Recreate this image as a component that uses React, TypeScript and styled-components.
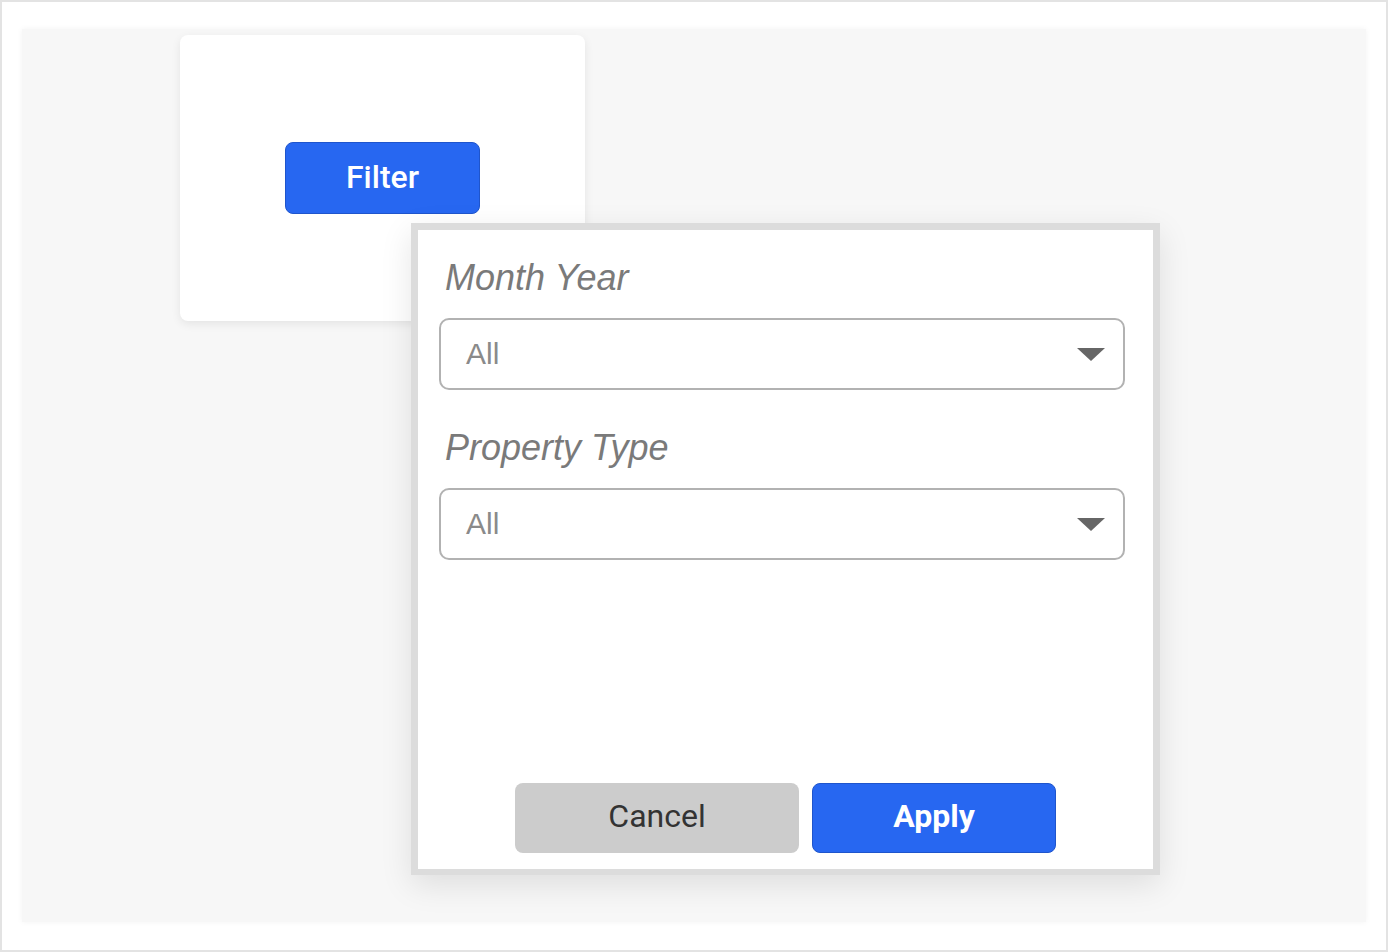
import styled, { createGlobalStyle } from "styled-components";

const GlobalStyle = createGlobalStyle`
  * {
    box-sizing: border-box;
  }
  body {
    margin: 0;
    background: #ffffff;
    font-family: "Liberation Sans", Arial, sans-serif;
  }
`;

const fields = [
  { label: "Month Year", value: "All" },
  { label: "Property Type", value: "All" },
];

const App = () => {
  return (
    <>
      <GlobalStyle />
      <Frame>
        <Panel>
          <Card>
            <FilterButton>Filter</FilterButton>
            <Popup>
              {fields.map((f) => (
                <Field key={f.label}>
                  <Label>{f.label}</Label>
                  <Select>
                    <SelectValue>{f.value}</SelectValue>
                    <Caret viewBox="0 0 28 13">
                      <path d="M0 0 H28 L14 13 Z" />
                    </Caret>
                  </Select>
                </Field>
              ))}
              <Actions>
                <ActionButton>Cancel</ActionButton>
                <ActionButton $primary>Apply</ActionButton>
              </Actions>
            </Popup>
          </Card>
        </Panel>
      </Frame>
    </>
  );
};

export default App;

const Frame = styled.div`
  width: 1388px;
  height: 952px;
  border: 2px solid #e3e3e3;
  background: #ffffff;
  padding: 27px 20px 28px 20px;
`;

const Panel = styled.div`
  height: 100%;
  background: #f7f7f7;
  box-shadow: 0 0 6px rgba(0, 0, 0, 0.05);
  padding: 6px 0 0 158px;
`;

const Card = styled.div`
  position: relative;
  width: 405px;
  height: 286px;
  background: #ffffff;
  border-radius: 8px;
  box-shadow: 0 3px 10px rgba(0, 0, 0, 0.08);
  display: flex;
  align-items: center;
  justify-content: center;
`;

const FilterButton = styled.button`
  width: 195px;
  height: 72px;
  padding: 0 0 2px;
  background: #2767f1;
  border: 1.5px solid #1f55cc;
  border-radius: 8px;
  color: #ffffff;
  font-family: Roboto, "Liberation Sans", sans-serif;
  font-size: 32px;
  font-weight: 500;
  cursor: pointer;
`;

const Popup = styled.div`
  position: absolute;
  left: 231px;
  top: 188px;
  width: 749px;
  height: 652px;
  background: #ffffff;
  border: 7px solid #dcdcdc;
  border-bottom-width: 6px;
  box-shadow: 0 10px 30px rgba(0, 0, 0, 0.1);
  padding: 27px 28px 16px 21px;
  display: flex;
  flex-direction: column;
  gap: 37px;
`;

const Field = styled.div`
  display: flex;
  flex-direction: column;
  gap: 19px;
`;

const Label = styled.div`
  padding-left: 6px;
  font-family: "Liberation Sans", Arial, sans-serif;
  font-style: italic;
  font-size: 36px;
  line-height: 42px;
  color: #7a7a7a;
`;

const Select = styled.div`
  height: 72px;
  border: 2px solid #b2b2b2;
  border-radius: 10px;
  padding: 0 18px 0 25px;
  display: flex;
  align-items: center;
  justify-content: space-between;
`;

const SelectValue = styled.span`
  font-family: "Liberation Sans", Arial, sans-serif;
  font-size: 30px;
  color: #8a8a8a;
`;

const Caret = styled.svg`
  width: 28px;
  height: 13px;
  fill: #666666;
`;

const Actions = styled.div`
  margin-top: auto;
  display: flex;
  justify-content: center;
  gap: 13px;
  padding-left: 7px;
`;

const ActionButton = styled.button<{ $primary?: boolean }>`
  width: ${(p) => (p.$primary ? "244px" : "284px")};
  height: 70px;
  padding: 0 0 4px;
  border-radius: 8px;
  border: ${(p) => (p.$primary ? "1.5px solid #1f55cc" : "none")};
  background: ${(p) => (p.$primary ? "#2767f1" : "#cccccc")};
  color: ${(p) => (p.$primary ? "#ffffff" : "#333333")};
  font-family: Roboto, "Liberation Sans", sans-serif;
  font-size: 32px;
  font-weight: ${(p) => (p.$primary ? 700 : 400)};
  cursor: pointer;
`;
